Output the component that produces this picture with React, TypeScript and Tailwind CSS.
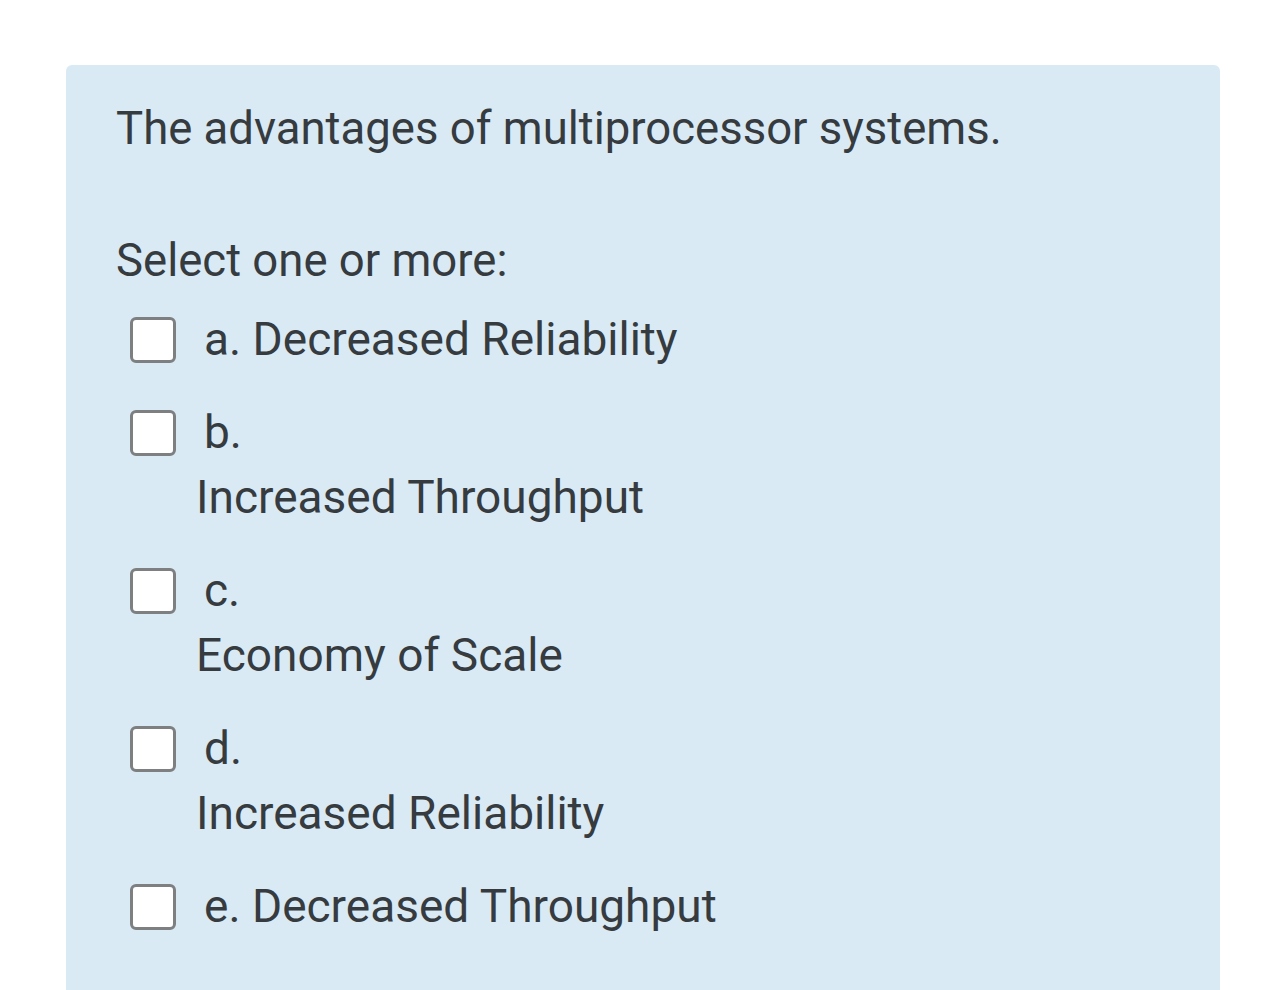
import React from 'react';

type Opt = { letter: string; text: string; split: boolean };

const options: Opt[] = [
  { letter: 'a.', text: 'Decreased Reliability', split: false },
  { letter: 'b.', text: 'Increased Throughput', split: true },
  { letter: 'c.', text: 'Economy of Scale', split: true },
  { letter: 'd.', text: 'Increased Reliability', split: true },
  { letter: 'e.', text: 'Decreased Throughput', split: false },
];

function Box() {
  return (
    <span className="mt-[4px] block h-[46px] w-[46px] shrink-0 rounded-[6px] border-[3px] border-[#7d7f81] bg-white" />
  );
}

export default function App() {
  return (
    <div className="h-[990px] w-[1262px] overflow-hidden bg-white font-['Roboto',sans-serif] text-[#363b40]">
      <div className="ml-[66px] mt-[65px] h-[960px] w-[1154px] rounded-[6px] bg-[#d9eaf5] pl-[50px] pt-[36px]">
        <div className="text-[45.5px] leading-[56px]">The advantages of multiprocessor systems.</div>
        <div className="mt-[76px] text-[45.5px] leading-[56px]">Select one or more:</div>
        <div className="mt-[24px] flex flex-col gap-[40px] pl-[14px]">
          {options.map((o) => (
            <div key={o.letter} className="flex items-start gap-[28px]">
              <Box />
              <div className="text-[46px] leading-[53px]">
                {o.split ? (
                  <>
                    <div>{o.letter}</div>
                    <div className="-ml-[8px] mt-[12px]">{o.text}</div>
                  </>
                ) : (
                  <div>
                    {o.letter} {o.text}
                  </div>
                )}
              </div>
            </div>
          ))}
        </div>
      </div>
    </div>
  );
}
